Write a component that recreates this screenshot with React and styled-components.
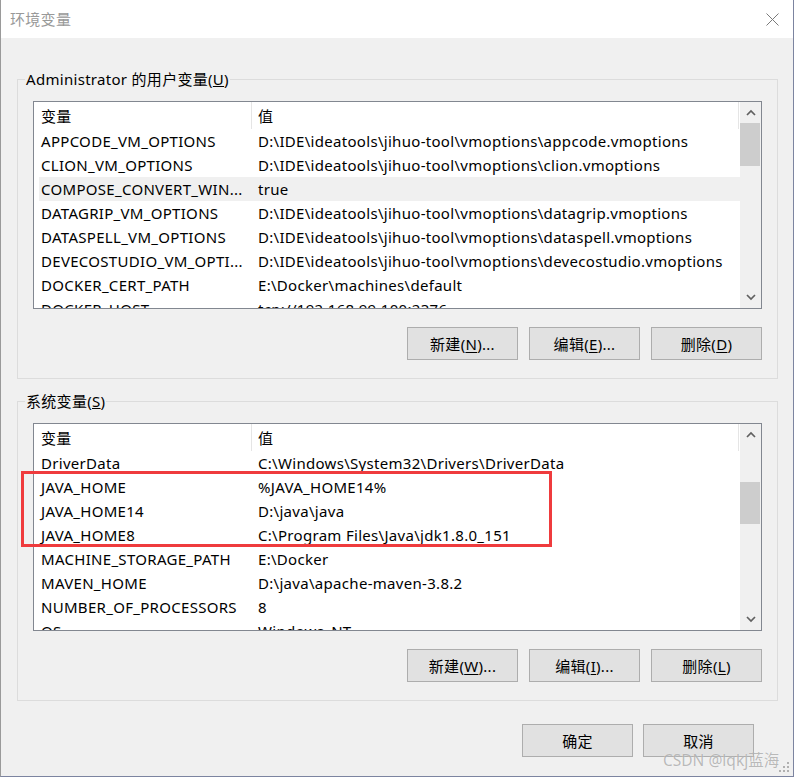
import React from "react";
import styled, { createGlobalStyle } from "styled-components";

const FONT = `"Noto Sans", "Noto Sans CJK SC", sans-serif`;

const Global = createGlobalStyle`
  html, body { margin: 0; padding: 0; background: #ffffff; }
  body { font-family: ${FONT}; font-size: 15px; color: #000; letter-spacing: 0.3px; }
  * { box-sizing: border-box; }
`;

const Window = styled.div`
  position: relative;
  width: 794px;
  height: 777px;
  display: flex;
  flex-direction: column;
  background: #f0f0f0;
  border-left: 1px solid #9a9a9a;
  border-right: 1px solid #7c84a0;
  border-bottom: 1px solid #7c84a0;
  overflow: hidden;
`;

const TitleBar = styled.div`
  height: 38px;
  flex: none;
  background: #ffffff;
  display: flex;
  align-items: center;
  justify-content: space-between;
  padding: 0 14px 0 9px;
`;

const Title = styled.span`
  color: #999999;
  font-size: 15px;
  line-height: 20px;
`;

const Body = styled.div`
  flex: 1;
  display: flex;
  flex-direction: column;
  padding: 0 0 0 16px;
`;

const Group = styled.fieldset`
  width: 761px;
  margin: ${(p) => p.$top}px 0 0 0;
  padding: 12px 15px 18px 15px;
  border: 1px solid #dcdcdc;
  min-width: 0;
`;

const Legend = styled.legend`
  margin-left: -8px;
  padding: 0 1px;
  font-size: 15px;
  line-height: 20px;
`;

const ListBox = styled.div`
  position: relative;
  height: 208px;
  border: 1px solid #828790;
  background: #ffffff;
  display: flex;
`;

const ListContent = styled.div`
  flex: 1;
  min-width: 0;
  overflow: hidden;
`;

const HeaderRow = styled.div`
  height: 27px;
  display: flex;
  align-items: stretch;
`;

const HeaderCell = styled.div`
  width: ${(p) => p.$w}px;
  flex: none;
  padding-left: ${(p) => p.$pad}px;
  border-right: 1px solid #e5e5e5;
  display: flex;
  align-items: center;
  line-height: 20px;
`;

const Row = styled.div`
  height: 24px;
  margin-left: 5px;
  display: flex;
  align-items: center;
  background: ${(p) => (p.$hot ? "#f0f0f0" : "transparent")};
  line-height: 20px;
  white-space: nowrap;
`;

const NameCell = styled.div`
  width: 213px;
  flex: none;
  padding: 0 6px 0 2px;
  overflow: hidden;
`;

const ValueCell = styled.div`
  flex: 1;
  padding-left: 6px;
  overflow: hidden;
`;

const ScrollBar = styled.div`
  width: 21px;
  flex: none;
  background: #f0f0f0;
  display: flex;
  flex-direction: column;
`;

const ArrowBtn = styled.div`
  height: 21px;
  flex: none;
  display: flex;
  align-items: center;
  justify-content: center;
`;

const Track = styled.div`
  flex: 1;
  display: flex;
  flex-direction: column;
`;

const Thumb = styled.div`
  margin: ${(p) => p.$offset}px 1px 0 0;
  height: ${(p) => p.$size}px;
  background: #cdcdcd;
`;

const ButtonRow = styled.div`
  display: flex;
  justify-content: flex-end;
  gap: ${(p) => p.$gap}px;
  margin: ${(p) => p.$top}px ${(p) => p.$right || 0}px 0 0;
`;

const Button = styled.div`
  width: 111px;
  height: 33px;
  border: 1px solid #adadad;
  background: #e1e1e1;
  display: flex;
  align-items: center;
  justify-content: center;
  font-size: 15px;
  line-height: 20px;
  u { text-underline-offset: 2px; }
`;

const RedBox = styled.div`
  position: absolute;
  left: -13px;
  top: 47px;
  width: 531px;
  height: 76px;
  border: 3px solid #ef3b3d;
  pointer-events: none;
`;

const Watermark = styled.div`
  position: absolute;
  left: 662px;
  top: 749px;
  font-size: 15.5px;
  line-height: 22px;
  letter-spacing: 0;
  color: rgba(120, 120, 120, 0.5);
  text-shadow: 0 0 1px rgba(255, 255, 255, 0.8);
  white-space: nowrap;
`;

const Grip = styled.svg`
  position: absolute;
  right: 3px;
  bottom: 3px;
`;

const Chevron = ({ up }) => (
  <svg width="10" height="7" viewBox="0 0 10 7">
    <path
      d={up ? "M1 6 L5 2 L9 6" : "M1 1 L5 5 L9 1"}
      fill="none"
      stroke="#606060"
      strokeWidth="1.7"
    />
  </svg>
);

const Close = () => (
  <svg width="13" height="13" viewBox="0 0 13 13">
    <path d="M0.5 0.5 L12.5 12.5 M12.5 0.5 L0.5 12.5" stroke="#7a7a7a" strokeWidth="1" />
  </svg>
);

const VarList = ({ rows, thumbOffset, thumbSize, mark }) => (
  <ListBox>
    <ListContent>
      <HeaderRow>
        <HeaderCell $w={218} $pad={7}>变量</HeaderCell>
        <HeaderCell $w={487} $pad={6}>值</HeaderCell>
      </HeaderRow>
      {rows.map(([n, v, hot]) => (
        <Row key={n} $hot={hot}>
          <NameCell>{n}</NameCell>
          <ValueCell>{v}</ValueCell>
        </Row>
      ))}
    </ListContent>
    <ScrollBar>
      <ArrowBtn><Chevron up /></ArrowBtn>
      <Track>
        <Thumb $offset={thumbOffset} $size={thumbSize} />
      </Track>
      <ArrowBtn><Chevron /></ArrowBtn>
    </ScrollBar>
    {mark && <RedBox />}
  </ListBox>
);

const userVars = [
  ["APPCODE_VM_OPTIONS", "D:\\IDE\\ideatools\\jihuo-tool\\vmoptions\\appcode.vmoptions"],
  ["CLION_VM_OPTIONS", "D:\\IDE\\ideatools\\jihuo-tool\\vmoptions\\clion.vmoptions"],
  ["COMPOSE_CONVERT_WIN...", "true", true],
  ["DATAGRIP_VM_OPTIONS", "D:\\IDE\\ideatools\\jihuo-tool\\vmoptions\\datagrip.vmoptions"],
  ["DATASPELL_VM_OPTIONS", "D:\\IDE\\ideatools\\jihuo-tool\\vmoptions\\dataspell.vmoptions"],
  ["DEVECOSTUDIO_VM_OPTI...", "D:\\IDE\\ideatools\\jihuo-tool\\vmoptions\\devecostudio.vmoptions"],
  ["DOCKER_CERT_PATH", "E:\\Docker\\machines\\default"],
  ["DOCKER_HOST", "tcp://192.168.99.100:2376"],
];

const sysVars = [
  ["DriverData", "C:\\Windows\\System32\\Drivers\\DriverData"],
  ["JAVA_HOME", "%JAVA_HOME14%"],
  ["JAVA_HOME14", "D:\\java\\java"],
  ["JAVA_HOME8", "C:\\Program Files\\Java\\jdk1.8.0_151"],
  ["MACHINE_STORAGE_PATH", "E:\\Docker"],
  ["MAVEN_HOME", "D:\\java\\apache-maven-3.8.2"],
  ["NUMBER_OF_PROCESSORS", "8"],
  ["OS", "Windows_NT"],
];

const Acc = ({ label, k, dots }) => (
  <>
    {label}(<u>{k}</u>){dots ? "..." : ""}
  </>
);

export default function App() {
  return (
    <>
      <Global />
      <Window>
        <TitleBar>
          <Title>环境变量</Title>
          <Close />
        </TitleBar>
        <Body>
          <Group $top={31}>
            <Legend>Administrator 的用户变量(<u>U</u>)</Legend>
            <VarList rows={userVars} thumbOffset={0} thumbSize={43} />
            <ButtonRow $gap={11} $top={18}>
              <Button><Acc label="新建" k="N" dots /></Button>
              <Button><Acc label="编辑" k="E" dots /></Button>
              <Button><Acc label="删除" k="D" /></Button>
            </ButtonRow>
          </Group>
          <Group $top={12}>
            <Legend>系统变量(<u>S</u>)</Legend>
            <VarList rows={sysVars} thumbOffset={37} thumbSize={42} mark />
            <ButtonRow $gap={11} $top={18}>
              <Button><Acc label="新建" k="W" dots /></Button>
              <Button><Acc label="编辑" k="I" dots /></Button>
              <Button><Acc label="删除" k="L" /></Button>
            </ButtonRow>
          </Group>
          <ButtonRow $gap={10} $top={23} $right={39}>
            <Button>确定</Button>
            <Button>取消</Button>
          </ButtonRow>
        </Body>
        <Watermark>CSDN @lqkj蓝海</Watermark>
        <Grip width="11" height="11" viewBox="0 0 11 11">
          {[
            [8, 0], [4, 4], [8, 4], [0, 8], [4, 8], [8, 8],
          ].map(([x, y]) => (
            <rect key={`${x}-${y}`} x={x} y={y} width="2" height="2" fill="#b0b0b0" />
          ))}
        </Grip>
      </Window>
    </>
  );
}
